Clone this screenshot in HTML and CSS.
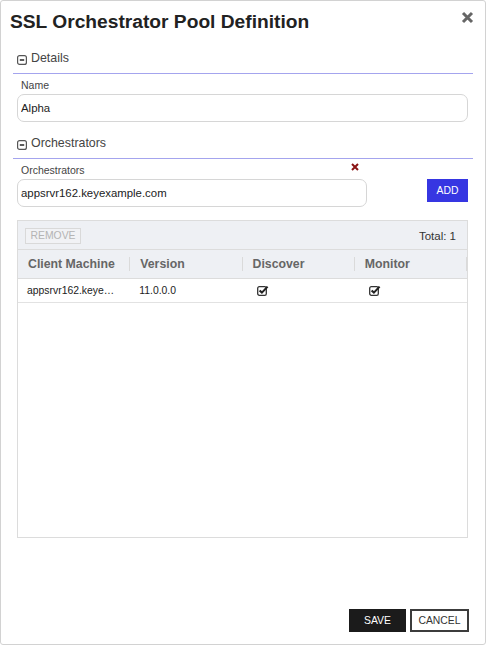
FILE: index.html
```html
<!DOCTYPE html>
<html lang="en">
<head>
<meta charset="utf-8">
<title>SSL Orchestrator Pool Definition</title>
<link rel="stylesheet" href="styles.css">
</head>
<body>
<div class="dialog">
  <header class="dlg-head">
    <h1 class="title">SSL Orchestrator Pool Definition</h1>
    <button class="close" aria-label="Close">
      <svg width="13" height="13" viewBox="0 0 13 13"><path d="M2 2 L11 11 M11 2 L2 11" stroke="#666" stroke-width="3" stroke-linecap="butt" fill="none"/></svg>
    </button>
  </header>

  <section class="section">
    <div class="sec-head">
      <svg class="toggle" width="10" height="10" viewBox="0 0 10 10"><rect x="0.6" y="0.6" width="8.8" height="8.8" rx="2" fill="none" stroke="#555" stroke-width="1.2"/><path d="M2.8 5 H7.2" stroke="#333" stroke-width="1.6"/></svg>
      <span>Details</span>
    </div>
    <div class="fields">
      <label class="label" for="name">Name</label>
      <input class="input" id="name" value="Alpha">
    </div>
  </section>

  <section class="section">
    <div class="sec-head">
      <svg class="toggle" width="10" height="10" viewBox="0 0 10 10"><rect x="0.6" y="0.6" width="8.8" height="8.8" rx="2" fill="none" stroke="#555" stroke-width="1.2"/><path d="M2.8 5 H7.2" stroke="#333" stroke-width="1.6"/></svg>
      <span>Orchestrators</span>
    </div>
    <div class="fields">
      <div class="orch-grid">
        <div class="label-row">
          <label class="label" for="orch">Orchestrators</label>
          <svg class="err" width="8" height="8" viewBox="0 0 8 8"><path d="M1 1 L7 7 M7 1 L1 7" stroke="#8a1414" stroke-width="2" fill="none"/></svg>
        </div>
        <input class="input" id="orch" value="appsrvr162.keyexample.com">
        <button class="btn-add">ADD</button>
      </div>

      <div class="grid-box">
        <div class="toolbar">
          <button class="btn-remove" disabled>REMOVE</button>
          <span class="total">Total: 1</span>
        </div>
        <div class="thead">
          <div class="th">Client Machine</div>
          <div class="th">Version</div>
          <div class="th">Discover</div>
          <div class="th">Monitor</div>
        </div>
        <div class="trow">
          <div class="td" title="appsrvr162.keyexample.com">appsrvr162.keye…</div>
          <div class="td">11.0.0.0</div>
          <div class="td check">
            <svg width="12" height="11" viewBox="0 0 12 11"><rect x="0.7" y="1.7" width="8.6" height="8.6" rx="1.6" fill="none" stroke="#333" stroke-width="1.3"/><path d="M2.6 5.4 L4.9 7.6 L10.6 1.6" fill="none" stroke="#222" stroke-width="2.1"/></svg>
          </div>
          <div class="td check">
            <svg width="12" height="11" viewBox="0 0 12 11"><rect x="0.7" y="1.7" width="8.6" height="8.6" rx="1.6" fill="none" stroke="#333" stroke-width="1.3"/><path d="M2.6 5.4 L4.9 7.6 L10.6 1.6" fill="none" stroke="#222" stroke-width="2.1"/></svg>
          </div>
        </div>
      </div>
    </div>
  </section>

  <footer class="dlg-foot">
    <button class="btn-save">SAVE</button>
    <button class="btn-cancel">CANCEL</button>
  </footer>
</div>
</body>
</html>
```

FILE: styles.css
```css
* { box-sizing: border-box; }

html, body {
  margin: 0;
  padding: 0;
  background: #fff;
}

body {
  font-family: "Liberation Sans", Arial, sans-serif;
  color: #222;
}

.dialog {
  width: 486px;
  height: 645px;
  border: 1px solid #d2d2d2;
  border-radius: 3px;
  display: flex;
  flex-direction: column;
  background: #fff;
}

.dlg-head {
  display: flex;
  justify-content: space-between;
  align-items: flex-start;
  padding: 9px 11px 0 9px;
}

.title {
  margin: 0;
  font-size: 19.2px;
  line-height: 23px;
  font-weight: bold;
  color: #222;
}

.close {
  border: 0;
  background: none;
  padding: 0;
  margin-top: 1px;
  width: 13px;
  height: 13px;
  cursor: pointer;
}

.close svg { display: block; }

.section {
  margin: 17px 12px 0 12px;
}

.section + .section {
  margin-top: 13px;
}

.sec-head {
  display: flex;
  align-items: flex-start;
  padding: 0 4px 7px 4px;
  border-bottom: 1px solid #a4a4ee;
  font-size: 12.4px;
  line-height: 16px;
  color: #444;
}

.toggle {
  margin-top: 5px;
  margin-right: 4px;
  flex: none;
}

.fields {
  padding: 0 5px 0 4px;
}

.label {
  display: block;
  margin: 5px 0 2px 0;
  padding-left: 4px;
  font-size: 10.5px;
  line-height: 13px;
  color: #444;
}

.input {
  display: block;
  width: 100%;
  height: 28px;
  border: 1px solid #d6d6d6;
  border-radius: 7px;
  padding: 0 3px;
  font-family: "Liberation Sans", Arial, sans-serif;
  font-size: 11.4px;
  color: #222;
  outline: none;
  background: #fff;
}

.orch-grid {
  display: grid;
  grid-template-columns: 350px 1fr;
  grid-template-rows: auto auto;
}

.label-row {
  grid-column: 1;
  grid-row: 1;
  display: flex;
  justify-content: space-between;
  align-items: flex-start;
}

.err {
  margin-top: 4px;
  margin-right: 8px;
}

.orch-grid .input {
  grid-column: 1;
  grid-row: 2;
}

.btn-add {
  grid-column: 2;
  grid-row: 2;
  justify-self: end;
  align-self: start;
  width: 41px;
  height: 23px;
  border: 0;
  padding: 0;
  background: #3636e2;
  color: #fff;
  font-family: "Liberation Sans", Arial, sans-serif;
  font-size: 10.4px;
}

.grid-box {
  margin-top: 13px;
  height: 318px;
  border: 1px solid #dcdcdc;
  background: #fff;
}

.toolbar {
  display: flex;
  justify-content: space-between;
  align-items: center;
  height: 29px;
  padding: 1px 11px 0 7px;
  background: #eef0f4;
  border-bottom: 1px solid #dcdcdc;
}

.btn-remove {
  width: 56px;
  height: 16px;
  padding: 0;
  border: 1px solid #d9d9d9;
  background: #f1f2f5;
  color: #b4b4b4;
  font-family: "Liberation Sans", Arial, sans-serif;
  font-size: 10.4px;
  line-height: 14px;
}

.total {
  font-size: 11.5px;
  line-height: 14px;
  color: #333;
}

.thead {
  display: grid;
  grid-template-columns: repeat(4, 1fr);
  padding: 7px 0;
  background: #eef0f4;
  border-bottom: 1px solid #dcdcdc;
}

.th {
  height: 14px;
  line-height: 14px;
  padding-left: 10px;
  border-right: 1px solid #dadada;
  font-size: 12.3px;
  font-weight: bold;
  color: #666;
}

.trow {
  display: grid;
  grid-template-columns: repeat(4, 1fr);
  border-bottom: 1px solid #e2e2e2;
}

.td {
  height: 23px;
  line-height: 23px;
  padding-left: 9px;
  font-size: 10.4px;
  color: #222;
  white-space: nowrap;
  min-width: 0;
}

.check {
  display: flex;
  align-items: center;
  padding-left: 14px;
}

.check svg { display: block; }

.dlg-foot {
  margin-top: auto;
  display: flex;
  justify-content: flex-end;
  gap: 4px;
  padding: 0 16px 12px 0;
}

.btn-save,
.btn-cancel {
  height: 23px;
  padding: 0;
  font-family: "Liberation Sans", Arial, sans-serif;
  font-size: 10.4px;
}

.btn-save {
  width: 57px;
  border: 0;
  background: #1b1b1b;
  color: #fff;
}

.btn-cancel {
  width: 59px;
  border: 2px solid #3c3c3c;
  background: #fff;
  color: #333;
}
```
